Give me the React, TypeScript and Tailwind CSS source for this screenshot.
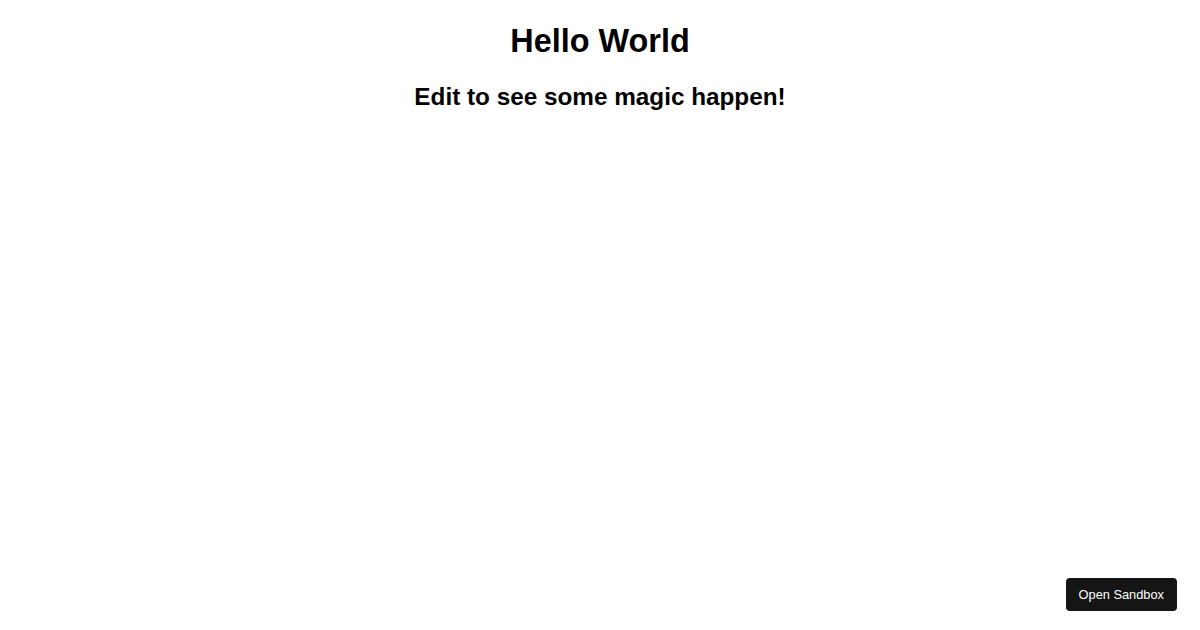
export default function App() {
    return (
        <div className="min-h-screen bg-white text-black" style={{ fontFamily: '"Liberation Sans", Arial, sans-serif' }}>
            <div className="text-center pt-[23px]">
                <h1 className="text-[32.4px] font-bold leading-[37px]">Hello World</h1>
                <h2 className="mt-[23px] text-[24.3px] font-bold leading-[28px]">Edit to see some magic happen!</h2>
            </div>

            <button className="fixed right-[23px] bottom-[19px] h-[33px] px-[13px] pt-px rounded-[4px] bg-[#151515] text-white text-[12.8px] leading-none">
                Open Sandbox
            </button>
        </div>
    );
}
